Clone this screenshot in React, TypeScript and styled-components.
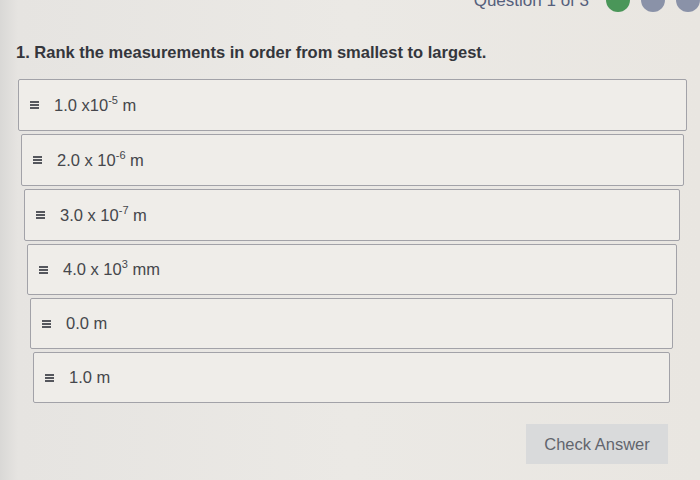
import React from 'react';
import styled, { createGlobalStyle } from 'styled-components';

const GlobalStyle = createGlobalStyle`
  html, body {
    margin: 0;
    padding: 0;
  }
  body {
    font-family: "Liberation Sans", Arial, sans-serif;
    background: #e9e7e3;
  }
`;

const Page = styled.div`
  width: 700px;
  height: 480px;
  overflow: hidden;
  background: linear-gradient(90deg, #d9d8d6 0px, #e6e4e1 18px, #ebe9e5 50%, #e9e6e1 100%);
  display: flex;
  flex-direction: column;
`;

const TopBar = styled.div`
  display: flex;
  justify-content: flex-end;
  align-items: center;
  gap: 11px;
  height: 14px;
  margin-top: -7px;
`;

const Progress = styled.span`
  font-size: 17px;
  color: #55607c;
  margin-right: 6px;
  margin-top: 2px;
`;

const Dot = styled.span<{ $done?: boolean }>`
  width: 24px;
  height: 24px;
  border-radius: 50%;
  background: ${(p) => (p.$done ? '#4a9659' : '#8a92a8')};
  flex-shrink: 0;
`;

const Title = styled.h1`
  margin: 36px 0 0 16px;
  font-size: 16.5px;
  font-weight: bold;
  color: #34363c;
`;

const List = styled.div`
  display: flex;
  flex-direction: column;
  gap: 3px;
  margin-top: 17px;
`;

const Row = styled.div<{ $step: number }>`
  height: ${(p) => (p.$step < 3 ? 52 : 51)}px;
  box-sizing: border-box;
  margin-left: ${(p) => 18 + p.$step * 3}px;
  margin-right: ${(p) => 13 + Math.round(p.$step * 3.4)}px;
  border: 1px solid #a2a2a8;
  border-radius: 2px;
  background: #efede9;
  display: flex;
  align-items: center;
  padding-left: 11px;
  gap: 15px;
  font-size: 16.5px;
  color: #45474c;
`;

const Handle = styled.span`
  display: flex;
  flex-direction: column;
  gap: 1px;
  width: 9px;
  span {
    height: 2px;
    background: #55575d;
  }
`;

const Sup = styled.sup`
  font-size: 11px;
  vertical-align: 7px;
  line-height: 0;
`;

const Footer = styled.div`
  display: flex;
  justify-content: flex-end;
  padding: 21px 32px 0 0;
`;

const CheckButton = styled.button`
  width: 142px;
  height: 40px;
  border: none;
  background: #d9dadb;
  color: #62656d;
  font-family: "Liberation Sans", Arial, sans-serif;
  font-size: 16.5px;
`;

const items: { base: string; exp?: string; unit: string }[] = [
  { base: '1.0 x10', exp: '-5', unit: ' m' },
  { base: '2.0 x 10', exp: '-6', unit: ' m' },
  { base: '3.0 x 10', exp: '-7', unit: ' m' },
  { base: '4.0 x 10', exp: '3', unit: ' mm' },
  { base: '0.0 m', unit: '' },
  { base: '1.0 m', unit: '' },
];

export default function App() {
  return (
    <Page>
      <GlobalStyle />
      <TopBar>
        <Progress>Question 1 of 3</Progress>
        <Dot $done />
        <Dot />
        <Dot />
      </TopBar>
      <Title>1. Rank the measurements in order from smallest to largest.</Title>
      <List>
        {items.map((it, i) => (
          <Row key={i} $step={i}>
            <Handle>
              <span />
              <span />
              <span />
            </Handle>
            <span>
              {it.base}
              {it.exp && <Sup>{it.exp}</Sup>}
              {it.unit}
            </span>
          </Row>
        ))}
      </List>
      <Footer>
        <CheckButton>Check Answer</CheckButton>
      </Footer>
    </Page>
  );
}
